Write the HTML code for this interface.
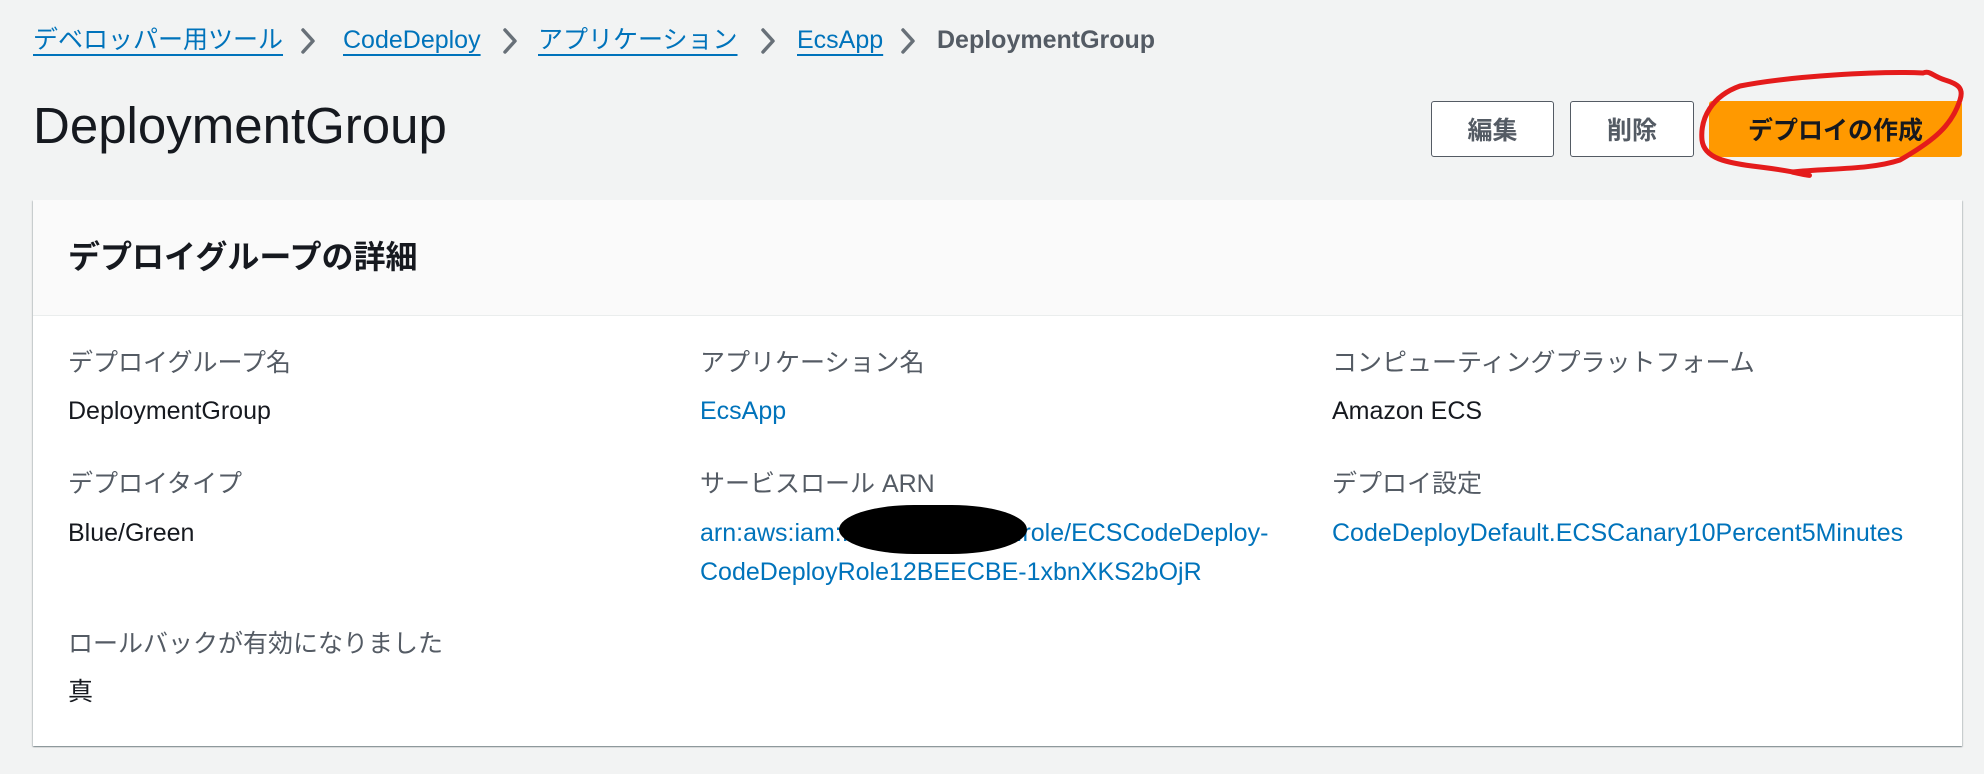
<!DOCTYPE html>
<html><head><meta charset="utf-8"><style>
*{margin:0;padding:0;box-sizing:border-box}
body{width:1984px;height:774px;background:#f2f3f3;font-family:"Liberation Sans","Noto Sans CJK JP",sans-serif;position:relative;overflow:hidden;color:#16191f}
.a{position:absolute;white-space:nowrap}
.bc{top:24px;font-size:25px;line-height:32px}
a{color:#0073bb;text-decoration:underline;text-underline-offset:6px;text-decoration-thickness:2px}
.btn{position:absolute;top:101px;height:56px;border:1.5px solid #545b64;border-radius:3px;background:#fff;font-size:25px;font-weight:bold;color:#545b64;display:flex;align-items:center;justify-content:center}
.card{position:absolute;left:33px;top:200px;width:1929px;height:546px;background:#fff;box-shadow:0 1px 1px 0 rgba(0,28,36,.3),1px 1px 1px 0 rgba(0,28,36,.15),-1px 1px 1px 0 rgba(0,28,36,.15)}
.hd{position:absolute;left:0;top:0;width:100%;height:116px;background:#fafafa;border-bottom:1px solid #eaeded}
.lb{font-size:25px;color:#545b64;line-height:30px}
.v{font-size:25px;color:#16191f;line-height:30px}
.l{color:#0073bb}
</style></head><body>
<div class="a bc" style="left:33px"><a>デベロッパー用ツール</a></div>
<div class="a bc" style="left:343px"><a>CodeDeploy</a></div>
<div class="a bc" style="left:538px"><a>アプリケーション</a></div>
<div class="a bc" style="left:797px"><a>EcsApp</a></div>
<div class="a bc" style="left:937px;font-weight:bold;color:#545b64">DeploymentGroup</div>
<svg class="a" style="left:0;top:0" width="1000" height="80"><g fill="none" stroke="#687078" stroke-width="3.5" stroke-linecap="round" stroke-linejoin="round"><polyline points="303,30 313,41 303,52"/><polyline points="505,30 515,41 505,52"/><polyline points="763,30 773,41 763,52"/><polyline points="903,30 913,41 903,52"/></g></svg>
<div class="a" style="left:33px;top:95px;font-size:51px;line-height:62px">DeploymentGroup</div>
<div class="btn" style="left:1431px;width:123px">編集</div>
<div class="btn" style="left:1570px;width:124px">削除</div>
<div class="btn" style="left:1709px;width:253px;background:#ff9900;border-color:#ff9900;color:#16191f">デプロイの作成</div>
<div class="card">
<div class="hd"><div class="a" style="left:35px;top:36px;font-size:32px;font-weight:bold;line-height:42px">デプロイグループの詳細</div></div>
</div>
<div class="a lb" style="left:68px;top:348px">デプロイグループ名</div>
<div class="a v" style="left:68px;top:396px">DeploymentGroup</div>
<div class="a lb" style="left:700px;top:348px">アプリケーション名</div>
<div class="a v l" style="left:700px;top:396px">EcsApp</div>
<div class="a lb" style="left:1332px;top:348px">コンピューティングプラットフォーム</div>
<div class="a v" style="left:1332px;top:396px">Amazon ECS</div>
<div class="a lb" style="left:68px;top:469px">デプロイタイプ</div>
<div class="a v" style="left:68px;top:518px">Blue/Green</div>
<div class="a lb" style="left:700px;top:469px">サービスロール ARN</div>
<div class="a v l" style="left:700px;top:518px">arn:aws:iam::123456789012:role/ECSCodeDeploy-</div>
<div class="a v l" style="left:700px;top:557px">CodeDeployRole12BEECBE-1xbnXKS2bOjR</div>
<div class="a" style="left:839px;top:505px;width:188px;height:49px;background:#000;border-radius:40%/50%"></div>
<div class="a lb" style="left:1332px;top:469px">デプロイ設定</div>
<div class="a v l" style="left:1332px;top:518px">CodeDeployDefault.ECSCanary10Percent5Minutes</div>
<div class="a lb" style="left:68px;top:629px">ロールバックが有効になりました</div>
<div class="a v" style="left:68px;top:677px">真</div>
<svg class="a" style="left:0;top:0" width="1984" height="774"><path d="M1923,73 C1880,71 1790,76 1740,86 C1712,96 1700,118 1702,140 C1704,158 1725,163 1760,167 C1800,172 1830,180 1792,172 C1830,168 1870,170 1900,160 C1935,140 1952,125 1960,100 C1964,88 1958,84 1945,80 C1932,76 1930,70 1923,73" fill="none" stroke="#e41b1b" stroke-width="5" stroke-linecap="round"/></svg>
</body></html>
